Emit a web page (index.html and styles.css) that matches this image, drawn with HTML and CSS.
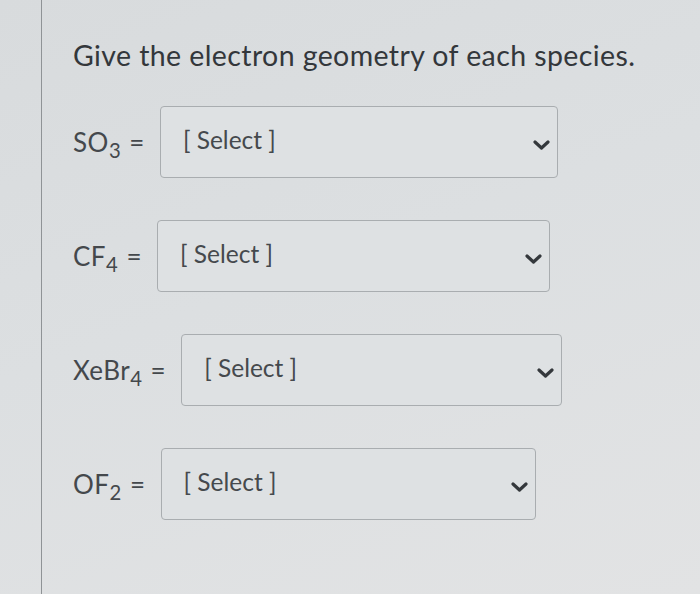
FILE: index.html
```html
<!DOCTYPE html>
<html>
<head>
<meta charset="utf-8">
<link rel="stylesheet" href="styles.css">
</head>
<body>
<div class="page">
  <div class="gutter"></div>
  <div class="content">
    <h1 class="title">Give the electron geometry of each species.</h1>
    <div class="row">
      <span class="label">SO<sub>3</sub> =</span>
      <div class="select w1"><span class="placeholder">[ Select ]</span><svg class="chev" viewBox="0 0 17 10" width="17" height="10"><path d="M2 2 L8.5 8 L15 2" fill="none" stroke="#34383c" stroke-width="3.2" stroke-linecap="round" stroke-linejoin="round"/></svg></div>
    </div>
    <div class="row">
      <span class="label">CF<sub>4</sub> =</span>
      <div class="select w2"><span class="placeholder">[ Select ]</span><svg class="chev" viewBox="0 0 17 10" width="17" height="10"><path d="M2 2 L8.5 8 L15 2" fill="none" stroke="#34383c" stroke-width="3.2" stroke-linecap="round" stroke-linejoin="round"/></svg></div>
    </div>
    <div class="row">
      <span class="label">XeBr<sub>4</sub> =</span>
      <div class="select w3"><span class="placeholder">[ Select ]</span><svg class="chev" viewBox="0 0 17 10" width="17" height="10"><path d="M2 2 L8.5 8 L15 2" fill="none" stroke="#34383c" stroke-width="3.2" stroke-linecap="round" stroke-linejoin="round"/></svg></div>
    </div>
    <div class="row">
      <span class="label">OF<sub>2</sub> =</span>
      <div class="select w4"><span class="placeholder">[ Select ]</span><svg class="chev" viewBox="0 0 17 10" width="17" height="10"><path d="M2 2 L8.5 8 L15 2" fill="none" stroke="#34383c" stroke-width="3.2" stroke-linecap="round" stroke-linejoin="round"/></svg></div>
    </div>
  </div>
</div>
</body>
</html>
```

FILE: styles.css
```css
html, body {
  margin: 0;
  padding: 0;
}
body {
  width: 700px;
  height: 594px;
  overflow: hidden;
  background: linear-gradient(160deg, #d8dbdd 0%, #dcdfe1 45%, #e2e3e4 100%);
  font-family: Lato, "Open Sans", sans-serif;
  color: #3a3e42;
}
.page {
  display: flex;
  height: 594px;
}
.gutter {
  width: 41px;
  flex: none;
  border-right: 1px solid #8f9396;
}
.content {
  flex: 1;
  padding: 39px 0 0 31px;
}
.title {
  margin: 0;
  font-size: 28.5px;
  font-weight: 400;
  letter-spacing: 0.4px;
  line-height: 1.15;
  color: #33373b;
}
.row {
  display: flex;
  align-items: center;
  gap: 15px;
  margin-top: 34px;
}
.row + .row {
  margin-top: 42px;
}
.label {
  font-size: 26px;
  letter-spacing: 0.5px;
  word-spacing: 1px;
  color: #44484c;
  white-space: nowrap;
}
.label sub {
  font-size: 0.78em;
  vertical-align: -0.3em;
  line-height: 0;
}
.select {
  display: flex;
  align-items: center;
  justify-content: space-between;
  height: 72px;
  box-sizing: border-box;
  padding: 0 7px 0 22px;
  border: 1.5px solid #a9adb0;
  border-radius: 4px;
  background: #dee1e3;
}
.w1 { width: 398px; }
.w2 { width: 393px; }
.w3 { width: 381px; }
.w4 { width: 375px; }
.placeholder {
  font-size: 24.5px;
  color: #45494d;
  margin-top: -4px;
}
.chev {
  display: block;
  margin-top: 6px;
}
```
